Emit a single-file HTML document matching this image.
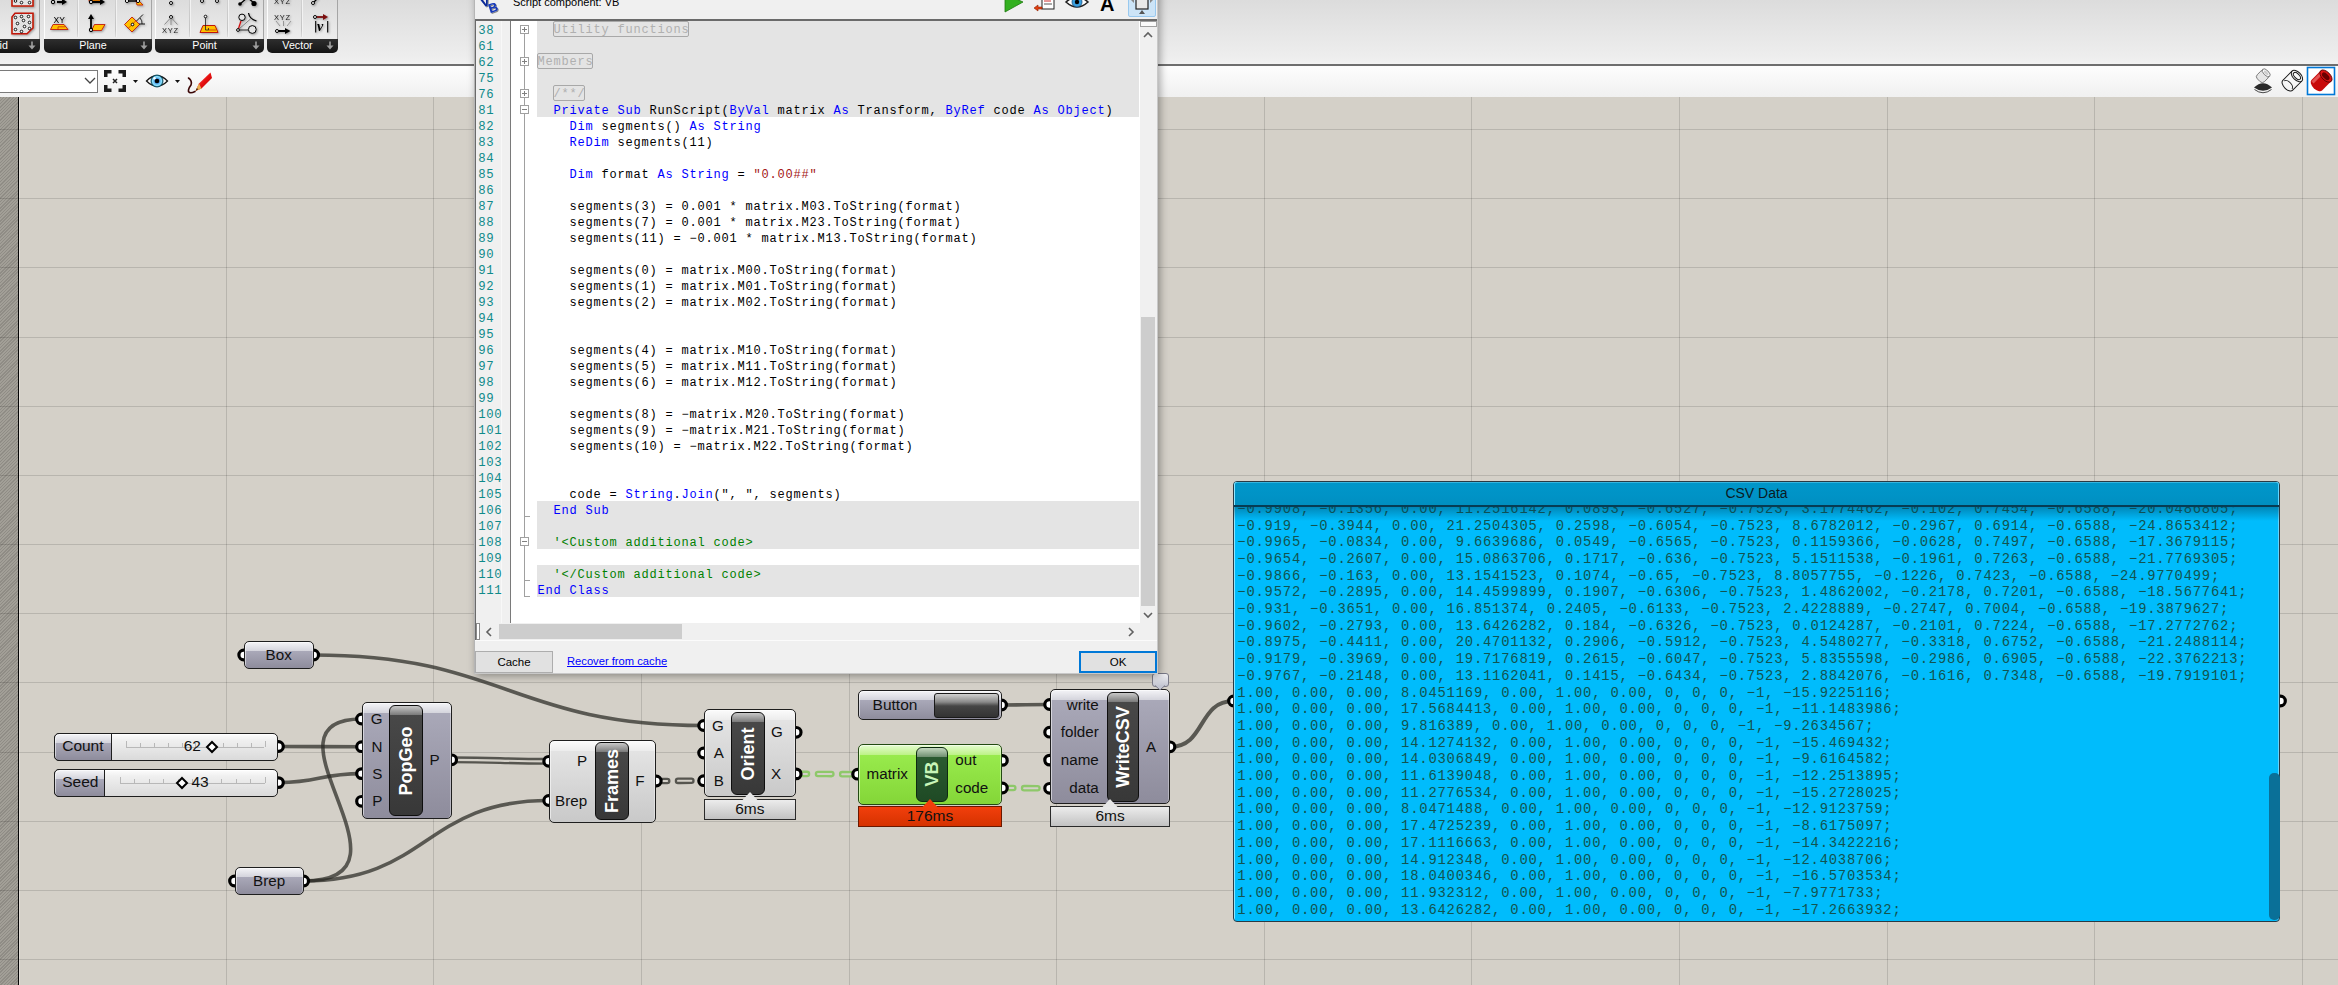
<!DOCTYPE html><html><head><meta charset="utf-8"><style>
*{box-sizing:border-box}
body{margin:0;width:2338px;height:985px;overflow:hidden;position:relative;background:#d4d0c8;font-family:"Liberation Sans",sans-serif;}
.a{position:absolute}
.mono{font-family:"Liberation Mono",monospace}
</style></head><body><div class="a" style="left:0;top:97px;width:2338px;height:888px;background:#d4d0c8"></div><div class="a" style="left:0;top:97px;width:18px;height:888px;background:repeating-linear-gradient(135deg,#8f8c85 0 1px,#a29f97 1px 2.3px)"></div><div class="a" style="left:18px;top:97px;width:1px;height:888px;background:#050505"></div><div class="a" style="left:19px;top:97px;width:1px;height:888px;background:#e2ded8"></div><div class="a" style="left:226px;top:97px;width:1px;height:888px;background:rgba(0,0,0,0.13)"></div><div class="a" style="left:433px;top:97px;width:1px;height:888px;background:rgba(0,0,0,0.13)"></div><div class="a" style="left:641px;top:97px;width:1px;height:888px;background:rgba(0,0,0,0.13)"></div><div class="a" style="left:849px;top:97px;width:1px;height:888px;background:rgba(0,0,0,0.13)"></div><div class="a" style="left:1056px;top:97px;width:1px;height:888px;background:rgba(0,0,0,0.13)"></div><div class="a" style="left:1264px;top:97px;width:1px;height:888px;background:rgba(0,0,0,0.13)"></div><div class="a" style="left:1471px;top:97px;width:1px;height:888px;background:rgba(0,0,0,0.13)"></div><div class="a" style="left:1679px;top:97px;width:1px;height:888px;background:rgba(0,0,0,0.13)"></div><div class="a" style="left:1887px;top:97px;width:1px;height:888px;background:rgba(0,0,0,0.13)"></div><div class="a" style="left:2094px;top:97px;width:1px;height:888px;background:rgba(0,0,0,0.13)"></div><div class="a" style="left:2302px;top:97px;width:1px;height:888px;background:rgba(0,0,0,0.13)"></div><div class="a" style="left:0px;top:129px;width:2338px;height:1px;background:rgba(0,0,0,0.13)"></div><div class="a" style="left:0px;top:198px;width:2338px;height:1px;background:rgba(0,0,0,0.13)"></div><div class="a" style="left:0px;top:267px;width:2338px;height:1px;background:rgba(0,0,0,0.13)"></div><div class="a" style="left:0px;top:337px;width:2338px;height:1px;background:rgba(0,0,0,0.13)"></div><div class="a" style="left:0px;top:406px;width:2338px;height:1px;background:rgba(0,0,0,0.13)"></div><div class="a" style="left:0px;top:475px;width:2338px;height:1px;background:rgba(0,0,0,0.13)"></div><div class="a" style="left:0px;top:544px;width:2338px;height:1px;background:rgba(0,0,0,0.13)"></div><div class="a" style="left:0px;top:613px;width:2338px;height:1px;background:rgba(0,0,0,0.13)"></div><div class="a" style="left:0px;top:682px;width:2338px;height:1px;background:rgba(0,0,0,0.13)"></div><div class="a" style="left:0px;top:752px;width:2338px;height:1px;background:rgba(0,0,0,0.13)"></div><div class="a" style="left:0px;top:821px;width:2338px;height:1px;background:rgba(0,0,0,0.13)"></div><div class="a" style="left:0px;top:890px;width:2338px;height:1px;background:rgba(0,0,0,0.13)"></div><div class="a" style="left:0px;top:959px;width:2338px;height:1px;background:rgba(0,0,0,0.13)"></div><div class="a" style="left:0;top:0;width:2338px;height:64px;background:linear-gradient(#dcdcdc,#eeeeee 58px,#f2f2f2)"></div><div class="a" style="left:0;top:64px;width:2338px;height:2px;background:#6e6e6e"></div><div class="a" style="left:0;top:66px;width:2338px;height:31px;background:linear-gradient(#fdfdfd,#f8f8f8 40%,#f0f0f0)"></div><div class="a" style="left:-10px;top:0;width:50px;height:39px;background:linear-gradient(#dcdcdc,#e9e9e9 30px,#ececec);border-left:1px solid #fdfdfd;border-right:1px solid #a5a5a5"></div><div class="a" style="left:-10px;top:39px;width:50px;height:14px;background:linear-gradient(#2e2e2e,#151515);border-radius:0 0 5px 5px"></div><svg class="a" style="left:27px;top:41px" width="10" height="10"><path d="M5 0.5 V6" stroke="#a0a0a0" stroke-width="1.6"/><path d="M1.5 4.5 L5 8.5 L8.5 4.5 Z" fill="#a0a0a0"/></svg><div class="a" style="left:-4px;top:37.5px;width:40px;height:14px;color:#fff;font-size:10.7px;line-height:15px">rid</div><div class="a" style="left:44px;top:0;width:108px;height:39px;background:linear-gradient(#dcdcdc,#e9e9e9 30px,#ececec);border-left:1px solid #fdfdfd;border-right:1px solid #a5a5a5"></div><div class="a" style="left:77px;top:0;width:1px;height:37px;background:linear-gradient(#d0d0d0,#c4c4c4 80%,#dcdcdc)"></div><div class="a" style="left:78px;top:0;width:1px;height:37px;background:#f2f2f2"></div><div class="a" style="left:115px;top:0;width:1px;height:37px;background:linear-gradient(#d0d0d0,#c4c4c4 80%,#dcdcdc)"></div><div class="a" style="left:116px;top:0;width:1px;height:37px;background:#f2f2f2"></div><div class="a" style="left:44px;top:39px;width:108px;height:14px;background:linear-gradient(#2e2e2e,#151515);border-radius:0 0 5px 5px"></div><div class="a" style="left:44px;top:37.5px;width:98px;height:14px;text-align:center;color:#fff;font-size:10.7px;line-height:15px">Plane</div><svg class="a" style="left:139px;top:41px" width="10" height="10"><path d="M5 0.5 V6" stroke="#a0a0a0" stroke-width="1.6"/><path d="M1.5 4.5 L5 8.5 L8.5 4.5 Z" fill="#a0a0a0"/></svg><div class="a" style="left:155px;top:0;width:109px;height:39px;background:linear-gradient(#dcdcdc,#e9e9e9 30px,#ececec);border-left:1px solid #fdfdfd;border-right:1px solid #a5a5a5"></div><div class="a" style="left:189px;top:0;width:1px;height:37px;background:linear-gradient(#d0d0d0,#c4c4c4 80%,#dcdcdc)"></div><div class="a" style="left:190px;top:0;width:1px;height:37px;background:#f2f2f2"></div><div class="a" style="left:227px;top:0;width:1px;height:37px;background:linear-gradient(#d0d0d0,#c4c4c4 80%,#dcdcdc)"></div><div class="a" style="left:228px;top:0;width:1px;height:37px;background:#f2f2f2"></div><div class="a" style="left:155px;top:39px;width:109px;height:14px;background:linear-gradient(#2e2e2e,#151515);border-radius:0 0 5px 5px"></div><div class="a" style="left:155px;top:37.5px;width:99px;height:14px;text-align:center;color:#fff;font-size:10.7px;line-height:15px">Point</div><svg class="a" style="left:251px;top:41px" width="10" height="10"><path d="M5 0.5 V6" stroke="#a0a0a0" stroke-width="1.6"/><path d="M1.5 4.5 L5 8.5 L8.5 4.5 Z" fill="#a0a0a0"/></svg><div class="a" style="left:267px;top:0;width:71px;height:39px;background:linear-gradient(#dcdcdc,#e9e9e9 30px,#ececec);border-left:1px solid #fdfdfd;border-right:1px solid #a5a5a5"></div><div class="a" style="left:301px;top:0;width:1px;height:37px;background:linear-gradient(#d0d0d0,#c4c4c4 80%,#dcdcdc)"></div><div class="a" style="left:302px;top:0;width:1px;height:37px;background:#f2f2f2"></div><div class="a" style="left:267px;top:39px;width:71px;height:14px;background:linear-gradient(#2e2e2e,#151515);border-radius:0 0 5px 5px"></div><div class="a" style="left:267px;top:37.5px;width:61px;height:14px;text-align:center;color:#fff;font-size:10.7px;line-height:15px">Vector</div><svg class="a" style="left:325px;top:41px" width="10" height="10"><path d="M5 0.5 V6" stroke="#a0a0a0" stroke-width="1.6"/><path d="M1.5 4.5 L5 8.5 L8.5 4.5 Z" fill="#a0a0a0"/></svg><svg class="a" style="left:0;top:0" width="340" height="40">
<defs><filter id="sh" x="-20%" y="-20%" width="150%" height="150%"><feDropShadow dx="1" dy="1" stdDeviation="0.8" flood-opacity="0.35"/></filter></defs>
<g filter="url(#sh)">
<!-- rid row1 -->
<path d="M12 -4 H33 V6 H12 Z" fill="#e4e4e4" stroke="#c01808" stroke-width="1.6"/>
<circle cx="15.5" cy="1" r="1.3" fill="#fff" stroke="#000" stroke-width="0.9"/><circle cx="21.5" cy="2.6" r="1.3" fill="#fff" stroke="#000" stroke-width="0.9"/><circle cx="29.5" cy="2.6" r="1.3" fill="#fff" stroke="#000" stroke-width="0.9"/>
<!-- rid row2 -->
<path d="M15 13.2 H33 V28 L27 33.8 H12 V17 Z" fill="#e2e2e2" stroke="#c01808" stroke-width="1.6"/>
<g fill="#fff" stroke="#000" stroke-width="0.9">
<circle cx="15.5" cy="17.5" r="1.3"/><circle cx="21.5" cy="16.5" r="1.3"/><circle cx="28.5" cy="16.5" r="1.3"/><circle cx="23.5" cy="20.5" r="1.3"/><circle cx="17.5" cy="23.5" r="1.3"/><circle cx="29.5" cy="22.5" r="1.3"/><circle cx="24.5" cy="26.5" r="1.3"/><circle cx="15.5" cy="29.5" r="1.3"/><circle cx="21.5" cy="31.5" r="1.3"/><circle cx="29.5" cy="28.5" r="1.3"/></g>
<!-- plane row1 -->
<circle cx="53" cy="2" r="1.6" fill="#fff" stroke="#000" stroke-width="1.1"/><path d="M57 2 H63" stroke="#000" stroke-width="2.2"/><path d="M62 -1.5 L67 2 L62 5 Z" fill="#000"/>
<rect x="89" y="-3" width="12" height="4" fill="#ffc000" stroke="#c01808" stroke-width="0.8"/><circle cx="91" cy="2" r="1.6" fill="#fff" stroke="#000" stroke-width="1.1"/><path d="M93 2 H101" stroke="#000" stroke-width="2.2"/><path d="M100 -1.5 L105 2 L100 5 Z" fill="#000"/>
<path d="M135 -3 L143 5 L137 5 Z" fill="#ffc000" stroke="#c01808" stroke-width="0.8"/><circle cx="127" cy="1" r="1.6" fill="#fff" stroke="#000" stroke-width="1"/><circle cx="138" cy="1" r="1.6" fill="#fff" stroke="#000" stroke-width="1"/><path d="M128.5 1 H136.5" stroke="#000" stroke-width="1.5"/>
<!-- plane row2 -->
<text x="53.5" y="22.5" font-family="Liberation Sans" font-size="8.5" fill="#000">XY</text>
<path d="M53 24.5 H64 L68 29.5 H50.5 Z" fill="#ffc000" stroke="#c01808" stroke-width="0.9"/><path d="M58 29.5 V26.8 H65" fill="none" stroke="#c01808" stroke-width="0.7"/>
<path d="M91 30 V17" stroke="#000" stroke-width="1.8"/><path d="M88 19 L91 14 L94 19 Z" fill="#000"/>
<path d="M94.5 24.5 H105 L101.5 30.5 H91.5 Z" fill="#ffc000" stroke="#c01808" stroke-width="0.9"/><circle cx="91" cy="30" r="1.6" fill="#fff" stroke="#000" stroke-width="1.1"/>
<path d="M132 17 L139.5 24.5 L132 32 L124.5 24.5 Z" fill="#ffc000" stroke="#c01808" stroke-width="0.9"/><path d="M128.3 28.3 L135.8 20.8" stroke="#c01808" stroke-width="0.7"/><circle cx="132.5" cy="24.5" r="1.3" fill="#fff" stroke="#000" stroke-width="1"/>
<path d="M136.5 21 L143 14.5 M139 24 H145" stroke="#000" stroke-width="0.9"/><path d="M140 18 Q142.5 20.5 142 24" fill="none" stroke="#000" stroke-width="0.8"/>
<!-- point row1 -->
<circle cx="171" cy="3" r="1.5" fill="#fff" stroke="#000" stroke-width="1"/>
<circle cx="202" cy="1" r="1.5" fill="#fff" stroke="#000" stroke-width="1"/><circle cx="217" cy="1" r="1.5" fill="#fff" stroke="#000" stroke-width="1"/>
<path d="M240 4 L247 -2 M248 -2 L254 3" stroke="#000" stroke-width="1.3"/><circle cx="240" cy="4" r="1.8" fill="#000"/><circle cx="254" cy="3.5" r="2.6" fill="#000"/>
<!-- point row2 -->
<circle cx="171" cy="17" r="1.5" fill="#fff" stroke="#000" stroke-width="1"/>
<path d="M170 18.5 L164.5 24.5 M171 18.5 V25 M172 18.5 L177.5 24.5" stroke="#777" stroke-width="0.8"/>
<text x="162" y="33" font-family="Liberation Sans" font-size="7.5" fill="#222" letter-spacing="0.8">XYZ</text>
<path d="M203 25.5 H215 L218 32.5 H200 Z" fill="#ffc000" stroke="#c01808" stroke-width="1"/><path d="M208.5 30 H216" stroke="#c01808" stroke-width="0.7"/>
<path d="M205.5 17.5 V30 H208.5 V28" fill="none" stroke="#222" stroke-width="0.8"/><circle cx="205.5" cy="16.5" r="1.3" fill="#fff" stroke="#000" stroke-width="0.9"/>
<path d="M239 29 L250.5 19" stroke="#444" stroke-width="0.6"/><path d="M238 30 L241 21" stroke="#d01010" stroke-width="1.3"/><path d="M239 30 H248.3" stroke="#111" stroke-width="0.9"/>
<circle cx="242" cy="17.3" r="3.2" fill="#e4e4e4" stroke="#000" stroke-width="1"/><circle cx="252.3" cy="29.5" r="3.9" fill="#e4e4e4" stroke="#000" stroke-width="1"/><circle cx="238" cy="30" r="1.4" fill="#fff" stroke="#000" stroke-width="1"/>
<path d="M248.5 13 Q249.5 19 256.5 21" fill="none" stroke="#000" stroke-width="1.3"/>
<!-- vector row1 -->
<text x="274" y="4" font-family="Liberation Sans" font-size="7.5" fill="#222" letter-spacing="0.8">XYZ</text>
<circle cx="313" cy="3" r="1.5" fill="#fff" stroke="#000" stroke-width="1"/><path d="M314 2 L318 -2" stroke="#000" stroke-width="1.2"/>
<!-- vector row2 -->
<text x="274" y="20" font-family="Liberation Sans" font-size="7.5" fill="#222" letter-spacing="0.8">XYZ</text>
<path d="M276 21 L280 26 M283.5 21 V26 M291 21 L287 26" stroke="#777" stroke-width="0.7"/>
<path d="M278 31 H286" stroke="#000" stroke-width="2"/><path d="M285 28 L290.5 31 L285 34 Z" fill="#000"/><circle cx="277" cy="31" r="1.5" fill="#fff" stroke="#000" stroke-width="1"/>
<path d="M316.5 17 H324" stroke="#7a0a0a" stroke-width="1.8"/><path d="M323 14 L328 17 L323 20 Z" fill="#7a0a0a"/><circle cx="315" cy="17" r="1.5" fill="#fff" stroke="#000" stroke-width="1"/>
<path d="M315.7 21 V32.5 M327.7 21 V32.5" stroke="#000" stroke-width="1.1"/>
<text x="317" y="31" font-family="Liberation Serif" font-weight="bold" font-style="italic" font-size="14" fill="#000">v</text>
</g></svg><div class="a" style="left:-2px;top:70px;width:100px;height:23px;background:#fff;border:1px solid #7a7a7a"></div><svg class="a" style="left:84px;top:77px" width="12" height="8"><path d="M1 1 L6 6 L11 1" fill="none" stroke="#444" stroke-width="1.3"/></svg><svg class="a" style="left:100px;top:66px" width="115" height="31">
<g fill="#1c1c1c"><path d="M4 4 H11.5 V7.5 H7.5 V11 H4 Z"/><path d="M26 4 H18.5 V7.5 H22.5 V11 H26 Z"/><path d="M4 26 H11.5 V22.5 H7.5 V19 H4 Z"/><path d="M26 26 H18.5 V22.5 H22.5 V19 H26 Z"/></g>
<path d="M13 13 L17 17 M17 13 L13 17" stroke="#222" stroke-width="1.5"/>
<path d="M33 14 L38 14 L35.5 17 Z" fill="#111"/>
<defs><radialGradient id="iris" cx="0.5" cy="0.5" r="0.5"><stop offset="0.3" stop-color="#3a8ae0"/><stop offset="0.75" stop-color="#8ee4ff"/><stop offset="1" stop-color="#1a6a90"/></radialGradient><linearGradient id="pen" x1="0" y1="0" x2="1" y2="1"><stop offset="0" stop-color="#ff9090"/><stop offset="0.5" stop-color="#e81010"/><stop offset="1" stop-color="#a00000"/></linearGradient></defs><path d="M46.5 15 Q57 4.5 67.5 15 Q57 25.5 46.5 15 Z" fill="#fff" stroke="#161616" stroke-width="1.3"/><circle cx="57" cy="15" r="6" fill="url(#iris)" stroke="#0a4a5a" stroke-width="0.9"/><circle cx="57" cy="15" r="2.3" fill="#000"/><circle cx="54.5" cy="12.3" r="1.2" fill="#fff"/>
<path d="M75 14 L80 14 L77.5 17 Z" fill="#111"/>
<path d="M88.5 12 Q92.5 15 91 19 Q88 23 88.5 25.5 Q90 28 95 25.5" fill="none" stroke="#3a0505" stroke-width="1.6" stroke-linecap="round"/><path d="M95.5 25 L99 17.5 L110.5 6.5 L112 12 L101.5 22.5 Z" fill="url(#pen)"/><path d="M95.5 25 L99 17.5 L101.5 22.5 Z" fill="#e8b050"/><path d="M95.5 25 L97 22 L98 23.5 Z" fill="#301000"/>
</svg><svg class="a" style="left:2250px;top:66px" width="88" height="31">
<g transform="rotate(45 13 10)"><rect x="8" y="5" width="10" height="11" rx="3" fill="#e6e6e6" stroke="#666" stroke-width="0.8"/><ellipse cx="13" cy="5.5" rx="5" ry="2.5" fill="#fafafa" stroke="#666" stroke-width="0.8"/><ellipse cx="13" cy="5.5" rx="3" ry="1.3" fill="#ccc"/></g>
<path d="M4 21.5 Q13 13 22 21.5 Q13 28 4 21.5 Z" fill="#2a2a2a"/><path d="M4.5 23.5 Q13 30 21.5 23.5" fill="none" stroke="#333" stroke-width="0.9"/>
<g transform="rotate(45 42 15)" fill="none" stroke="#1a1a1a" stroke-width="1"><path d="M35 8 V21 A7 4 0 0 0 49 21 V8"/><ellipse cx="42" cy="8" rx="7" ry="4"/><ellipse cx="42" cy="8" rx="4.5" ry="2.3"/><path d="M36.5 20.5 A5.5 3 0 0 1 47.5 20.5" /></g>
<rect x="57.5" y="1.5" width="27" height="27" fill="#fff" stroke="#0078d7" stroke-width="1.6"/>
<g transform="rotate(45 71 15)"><path d="M63.5 8 V21 A7.5 4.2 0 0 0 78.5 21 V8 Z" fill="#c80a0a"/><rect x="64.5" y="9" width="3" height="13" fill="#f07070" opacity="0.7"/><ellipse cx="71" cy="8" rx="7.5" ry="4.2" fill="#e01414" stroke="#500" stroke-width="0.9"/><ellipse cx="71" cy="8.3" rx="4.7" ry="2.5" fill="#6a0000"/></g>
</svg><svg class="a" style="left:0;top:0" width="2338" height="985"><path d="M313.7,655 C503.7,655 513.6,725.5 703.6,725.5" fill="none" stroke="#2a2924" stroke-width="3.6" stroke-opacity="0.72"/><path d="M278.5,746.5 C318.5,746.5 321.5,746.7 361.5,746.7" fill="none" stroke="#2a2924" stroke-width="3.6" stroke-opacity="0.72"/><path d="M278.5,782.6 C320.5,782.6 319.5,773.6 361.5,773.6" fill="none" stroke="#2a2924" stroke-width="3.6" stroke-opacity="0.72"/><path d="M303.7,881 C429.7,881 249.5,719 361.5,719" fill="none" stroke="#2a2924" stroke-width="3.6" stroke-opacity="0.72"/><path d="M303.7,881 C428.7,881 423.70000000000005,800.5 548.7,800.5" fill="none" stroke="#2a2924" stroke-width="3.6" stroke-opacity="0.72"/><path d="M451.7,759.8 C499.7,759.8 500.70000000000005,761.3 548.7,761.3" fill="none" stroke="#56554f" stroke-width="7.0" stroke-linecap="butt"/><path d="M451.7,759.8 C499.7,759.8 500.70000000000005,761.3 548.7,761.3" fill="none" stroke="#d4d0c8" stroke-width="2.2" stroke-linecap="butt"/><path d="M656.3,781 C680.3,781 679.6,780.7 703.6,780.7" fill="none" stroke="#56554f" stroke-width="6.6" stroke-linecap="round" stroke-dasharray="13.5 11" stroke-dashoffset="2.8"/><path d="M656.3,781 C680.3,781 679.6,780.7 703.6,780.7" fill="none" stroke="#d4d0c8" stroke-width="2" stroke-linecap="round" stroke-dasharray="13.5 11" stroke-dashoffset="2.8"/><path d="M796.2,773.9 C826.2,773.9 827.6,774.2 857.6,774.2" fill="none" stroke="#8ec86a" stroke-width="6.6" stroke-linecap="round" stroke-dasharray="13.5 11" stroke-dashoffset="2.8"/><path d="M796.2,773.9 C826.2,773.9 827.6,774.2 857.6,774.2" fill="none" stroke="#d4d0c8" stroke-width="2" stroke-linecap="round" stroke-dasharray="13.5 11" stroke-dashoffset="2.8"/><path d="M1002.4,788 C1026.4,788 1025.6,788.3 1049.6,788.3" fill="none" stroke="#8ec86a" stroke-width="6.6" stroke-linecap="round" stroke-dasharray="13.5 11" stroke-dashoffset="2.8"/><path d="M1002.4,788 C1026.4,788 1025.6,788.3 1049.6,788.3" fill="none" stroke="#d4d0c8" stroke-width="2" stroke-linecap="round" stroke-dasharray="13.5 11" stroke-dashoffset="2.8"/><path d="M1001.6,705 C1025.6,705 1025.6,704.5 1049.6,704.5" fill="none" stroke="#2a2924" stroke-width="3.6" stroke-opacity="0.72"/><path d="M1170,746.8 C1206,746.8 1197.5,701 1233.5,701" fill="none" stroke="#2a2924" stroke-width="4" stroke-opacity="0.72"/><circle cx="243.7" cy="655" r="4.8" fill="#fff" stroke="#000" stroke-width="3.2"/><circle cx="313.7" cy="655" r="4.8" fill="#fff" stroke="#000" stroke-width="3.2"/><circle cx="278.5" cy="746.5" r="4.8" fill="#fff" stroke="#000" stroke-width="3.2"/><circle cx="278.5" cy="782.6" r="4.8" fill="#fff" stroke="#000" stroke-width="3.2"/><circle cx="361.5" cy="719" r="4.8" fill="#fff" stroke="#000" stroke-width="3.2"/><circle cx="361.5" cy="746.7" r="4.8" fill="#fff" stroke="#000" stroke-width="3.2"/><circle cx="361.5" cy="773.6" r="4.8" fill="#fff" stroke="#000" stroke-width="3.2"/><circle cx="361.5" cy="801.3" r="4.8" fill="#fff" stroke="#000" stroke-width="3.2"/><circle cx="451.7" cy="759.8" r="4.8" fill="#fff" stroke="#000" stroke-width="3.2"/><circle cx="234.5" cy="881" r="4.8" fill="#fff" stroke="#000" stroke-width="3.2"/><circle cx="303.7" cy="881" r="4.8" fill="#fff" stroke="#000" stroke-width="3.2"/><circle cx="548.7" cy="761.3" r="4.8" fill="#fff" stroke="#000" stroke-width="3.2"/><circle cx="548.7" cy="800.5" r="4.8" fill="#fff" stroke="#000" stroke-width="3.2"/><circle cx="656.3" cy="781" r="4.8" fill="#fff" stroke="#000" stroke-width="3.2"/><circle cx="703.6" cy="725.5" r="4.8" fill="#fff" stroke="#000" stroke-width="3.2"/><circle cx="703.6" cy="753" r="4.8" fill="#fff" stroke="#000" stroke-width="3.2"/><circle cx="703.6" cy="780.7" r="4.8" fill="#fff" stroke="#000" stroke-width="3.2"/><circle cx="796.2" cy="732.3" r="4.8" fill="#fff" stroke="#000" stroke-width="3.2"/><circle cx="796.2" cy="773.9" r="4.8" fill="#fff" stroke="#000" stroke-width="3.2"/><circle cx="1001.6" cy="705" r="4.8" fill="#fff" stroke="#000" stroke-width="3.2"/><circle cx="857.6" cy="774.2" r="4.8" fill="#fff" stroke="#000" stroke-width="3.2"/><circle cx="1002.4" cy="760.4" r="4.8" fill="#fff" stroke="#000" stroke-width="3.2"/><circle cx="1002.4" cy="788" r="4.8" fill="#fff" stroke="#000" stroke-width="3.2"/><circle cx="1049.6" cy="704.5" r="4.8" fill="#fff" stroke="#000" stroke-width="3.2"/><circle cx="1049.6" cy="732.2" r="4.8" fill="#fff" stroke="#000" stroke-width="3.2"/><circle cx="1049.6" cy="760.1" r="4.8" fill="#fff" stroke="#000" stroke-width="3.2"/><circle cx="1049.6" cy="788.3" r="4.8" fill="#fff" stroke="#000" stroke-width="3.2"/><circle cx="1170" cy="746.8" r="4.8" fill="#fff" stroke="#000" stroke-width="3.2"/><circle cx="1233.5" cy="701" r="4.8" fill="#fff" stroke="#000" stroke-width="3.2"/><circle cx="2280.5" cy="701" r="4.8" fill="#fff" stroke="#000" stroke-width="3.2"/></svg><div class="a" style="left:243.7px;top:641.3px;width:70.0px;height:28.0px;background:linear-gradient(#f4f4f7 0px,#d4d4dc 9px,#a9a8b8 9.5px,#8e8c9c 100%);border:1px solid #1e1e1e;border-radius:5px;box-shadow:inset 1px 1px 0 rgba(255,255,255,0.55),inset -1px 0 0 rgba(255,255,255,0.35)"></div><div class="a" style="left:243.7px;top:645.3px;width:70.0px;height:20px;line-height:20px;text-align:center;white-space:nowrap;font-size:15.2px;color:#111;">Box</div><div class="a" style="left:234.5px;top:867.3px;width:69.2px;height:27.4px;background:linear-gradient(#f4f4f7 0px,#d4d4dc 9px,#a9a8b8 9.5px,#8e8c9c 100%);border:1px solid #1e1e1e;border-radius:5px;box-shadow:inset 1px 1px 0 rgba(255,255,255,0.55),inset -1px 0 0 rgba(255,255,255,0.35)"></div><div class="a" style="left:234.5px;top:871.0px;width:69.19999999999999px;height:20px;line-height:20px;text-align:center;white-space:nowrap;font-size:15.2px;color:#111;">Brep</div><div class="a" style="left:54.2px;top:732.5px;width:224.3px;height:28.1px;background:linear-gradient(#fdfdfd,#f0f0f0 6px,#dadada 100%);border:1px solid #1e1e1e;border-radius:5px;box-shadow:inset 0 1px 0 #fff"></div><div class="a" style="left:54.2px;top:732.5px;width:58.1px;height:28.1px;background:linear-gradient(#f4f4f7 0px,#d4d4dc 9px,#a9a8b8 9.5px,#8e8c9c 100%);border:1px solid #1e1e1e;border-right:1.5px solid #1e1e1e;border-radius:5px 0 0 5px;box-shadow:inset 1px 1px 0 rgba(255,255,255,0.55)"></div><div class="a" style="left:62.2px;top:735.5px;height:20px;line-height:20px;white-space:nowrap;font-size:15.2px;color:#111;font-size:15.5px">Count</div><div class="a" style="left:126.3px;top:746.5px;width:138.2px;height:1.0px;background:#b8b8b8"></div><div class="a" style="left:126.3px;top:740.5px;width:1.0px;height:6.0px;background:#b8b8b8"></div><div class="a" style="left:140.1px;top:742.5px;width:1.0px;height:4.0px;background:#b8b8b8"></div><div class="a" style="left:153.9px;top:742.5px;width:1.0px;height:4.0px;background:#b8b8b8"></div><div class="a" style="left:167.8px;top:742.5px;width:1.0px;height:4.0px;background:#b8b8b8"></div><div class="a" style="left:181.6px;top:742.5px;width:1.0px;height:4.0px;background:#b8b8b8"></div><div class="a" style="left:195.4px;top:742.5px;width:1.0px;height:4.0px;background:#b8b8b8"></div><div class="a" style="left:209.2px;top:742.5px;width:1.0px;height:4.0px;background:#b8b8b8"></div><div class="a" style="left:223.0px;top:742.5px;width:1.0px;height:4.0px;background:#b8b8b8"></div><div class="a" style="left:236.9px;top:742.5px;width:1.0px;height:4.0px;background:#b8b8b8"></div><div class="a" style="left:250.7px;top:742.5px;width:1.0px;height:4.0px;background:#b8b8b8"></div><div class="a" style="left:264.5px;top:740.5px;width:1.0px;height:6.0px;background:#b8b8b8"></div><div class="a" style="left:168.3px;top:735.5px;width:48px;height:20px;line-height:20px;text-align:center;font-size:15.5px;color:#111;background:transparent">62</div><svg class="a" style="left:205.4px;top:739.5px" width="14" height="14"><path d="M7 2 L12 7 L7 12 L2 7 Z" fill="#fff" stroke="#000" stroke-width="2"/></svg><div class="a" style="left:54.2px;top:768.6px;width:224.3px;height:28.1px;background:linear-gradient(#fdfdfd,#f0f0f0 6px,#dadada 100%);border:1px solid #1e1e1e;border-radius:5px;box-shadow:inset 0 1px 0 #fff"></div><div class="a" style="left:54.2px;top:768.6px;width:51.3px;height:28.1px;background:linear-gradient(#f4f4f7 0px,#d4d4dc 9px,#a9a8b8 9.5px,#8e8c9c 100%);border:1px solid #1e1e1e;border-right:1.5px solid #1e1e1e;border-radius:5px 0 0 5px;box-shadow:inset 1px 1px 0 rgba(255,255,255,0.55)"></div><div class="a" style="left:62.2px;top:771.7px;height:20px;line-height:20px;white-space:nowrap;font-size:15.2px;color:#111;font-size:15.5px">Seed</div><div class="a" style="left:119.5px;top:782.7px;width:145.0px;height:1.0px;background:#b8b8b8"></div><div class="a" style="left:119.5px;top:776.7px;width:1.0px;height:6.0px;background:#b8b8b8"></div><div class="a" style="left:134.0px;top:778.7px;width:1.0px;height:4.0px;background:#b8b8b8"></div><div class="a" style="left:148.5px;top:778.7px;width:1.0px;height:4.0px;background:#b8b8b8"></div><div class="a" style="left:163.0px;top:778.7px;width:1.0px;height:4.0px;background:#b8b8b8"></div><div class="a" style="left:177.5px;top:778.7px;width:1.0px;height:4.0px;background:#b8b8b8"></div><div class="a" style="left:192.0px;top:778.7px;width:1.0px;height:4.0px;background:#b8b8b8"></div><div class="a" style="left:206.5px;top:778.7px;width:1.0px;height:4.0px;background:#b8b8b8"></div><div class="a" style="left:221.0px;top:778.7px;width:1.0px;height:4.0px;background:#b8b8b8"></div><div class="a" style="left:235.5px;top:778.7px;width:1.0px;height:4.0px;background:#b8b8b8"></div><div class="a" style="left:250.0px;top:778.7px;width:1.0px;height:4.0px;background:#b8b8b8"></div><div class="a" style="left:264.5px;top:776.7px;width:1.0px;height:6.0px;background:#b8b8b8"></div><div class="a" style="left:176.0px;top:771.7px;width:48px;height:20px;line-height:20px;text-align:center;font-size:15.5px;color:#111;background:transparent">43</div><svg class="a" style="left:175.0px;top:775.7px" width="14" height="14"><path d="M7 2 L12 7 L7 12 L2 7 Z" fill="#fff" stroke="#000" stroke-width="2"/></svg><div class="a" style="left:361.5px;top:702.2px;width:90.2px;height:116.4px;background:linear-gradient(#f4f4f7 0px,#d4d4dc 10px,#a9a8b8 10.5px,#8e8c9c 100%);border:1px solid #1e1e1e;border-radius:5px;box-shadow:inset 1px 1px 0 rgba(255,255,255,0.55),inset -1px 0 0 rgba(255,255,255,0.35)"></div><div class="a" style="left:389.3px;top:705.3px;width:33.5px;height:110.9px;background:linear-gradient(#c8c8c8 0px,#7a7a7a 9px,#484848 9.5px,#383838 100%);border:1.5px solid #0e0e0e;border-radius:6px;"></div><div class="a" style="left:346.1px;top:748.8px;width:120px;height:24px;line-height:24px;text-align:center;color:#ffffff;font-weight:bold;font-size:18px;transform:rotate(-90deg);white-space:nowrap">PopGeo</div><div class="a" style="left:362.5px;top:709.0px;width:20px;height:20px;line-height:20px;text-align:right;white-space:nowrap;font-size:15.2px;color:#111;">G</div><div class="a" style="left:362.5px;top:736.7px;width:20px;height:20px;line-height:20px;text-align:right;white-space:nowrap;font-size:15.2px;color:#111;">N</div><div class="a" style="left:362.5px;top:763.6px;width:20px;height:20px;line-height:20px;text-align:right;white-space:nowrap;font-size:15.2px;color:#111;">S</div><div class="a" style="left:362.5px;top:791.3px;width:20px;height:20px;line-height:20px;text-align:right;white-space:nowrap;font-size:15.2px;color:#111;">P</div><div class="a" style="left:429.4px;top:749.8px;height:20px;line-height:20px;white-space:nowrap;font-size:15.2px;color:#111;">P</div><div class="a" style="left:548.7px;top:739.7px;width:107.6px;height:82.9px;background:linear-gradient(#fbfbfb 0px,#ececec 10px,#e3e3e3 10.5px,#c9c9c9 100%);border:1px solid #1e1e1e;border-radius:5px;box-shadow:inset 1px 1px 0 rgba(255,255,255,0.55),inset -1px 0 0 rgba(255,255,255,0.35)"></div><div class="a" style="left:595.2px;top:742.4px;width:33.9px;height:77.8px;background:linear-gradient(#c8c8c8 0px,#7a7a7a 9px,#484848 9.5px,#383838 100%);border:1.5px solid #0e0e0e;border-radius:6px;"></div><div class="a" style="left:552.2px;top:769.3px;width:120px;height:24px;line-height:24px;text-align:center;color:#ffffff;font-weight:bold;font-size:18px;transform:rotate(-90deg);white-space:nowrap">Frames</div><div class="a" style="left:547.2px;top:751.3px;width:40px;height:20px;line-height:20px;text-align:right;white-space:nowrap;font-size:15.2px;color:#111;">P</div><div class="a" style="left:547.2px;top:790.5px;width:40px;height:20px;line-height:20px;text-align:right;white-space:nowrap;font-size:15.2px;color:#111;">Brep</div><div class="a" style="left:635.2px;top:771.0px;height:20px;line-height:20px;white-space:nowrap;font-size:15.2px;color:#111;">F</div><div class="a" style="left:703.6px;top:709.2px;width:92.6px;height:88.1px;background:linear-gradient(#fbfbfb 0px,#ececec 10px,#e3e3e3 10.5px,#c9c9c9 100%);border:1px solid #1e1e1e;border-radius:5px;box-shadow:inset 1px 1px 0 rgba(255,255,255,0.55),inset -1px 0 0 rgba(255,255,255,0.35)"></div><div class="a" style="left:731.2px;top:712.2px;width:33.8px;height:83.1px;background:linear-gradient(#c8c8c8 0px,#7a7a7a 9px,#484848 9.5px,#383838 100%);border:1.5px solid #0e0e0e;border-radius:6px;"></div><div class="a" style="left:688.1px;top:741.8px;width:120px;height:24px;line-height:24px;text-align:center;color:#ffffff;font-weight:bold;font-size:18px;transform:rotate(-90deg);white-space:nowrap">Orient</div><div class="a" style="left:703.9px;top:715.5px;width:20px;height:20px;line-height:20px;text-align:right;white-space:nowrap;font-size:15.2px;color:#111;">G</div><div class="a" style="left:703.9px;top:743.0px;width:20px;height:20px;line-height:20px;text-align:right;white-space:nowrap;font-size:15.2px;color:#111;">A</div><div class="a" style="left:703.9px;top:770.7px;width:20px;height:20px;line-height:20px;text-align:right;white-space:nowrap;font-size:15.2px;color:#111;">B</div><div class="a" style="left:771.0px;top:722.3px;height:20px;line-height:20px;white-space:nowrap;font-size:15.2px;color:#111;">G</div><div class="a" style="left:771.0px;top:763.9px;height:20px;line-height:20px;white-space:nowrap;font-size:15.2px;color:#111;">X</div><div class="a" style="left:703.6px;top:799.4px;width:92.6px;height:20.3px;background:linear-gradient(#ececec,#c2c2c2);border:1px solid #2a2a2a;"></div><svg class="a" style="left:740.5px;top:791.4px" width="18" height="10"><path d="M1 9.5 L9 1 L17 9.5 Z" fill="#e6e6e6"/></svg><div class="a" style="left:703.6px;top:798.5px;width:92.60000000000002px;height:20px;line-height:20px;text-align:center;white-space:nowrap;font-size:15.2px;color:#111;font-size:15.5px">6ms</div><div class="a" style="left:858.4px;top:690.0px;width:143.2px;height:30.3px;background:linear-gradient(#f4f4f7 0px,#d4d4dc 9px,#a9a8b8 9.5px,#8e8c9c 100%);border:1px solid #1e1e1e;border-radius:5px;box-shadow:inset 1px 1px 0 rgba(255,255,255,0.55),inset -1px 0 0 rgba(255,255,255,0.35)"></div><div class="a" style="left:855.0px;top:695.0px;width:80px;height:20px;line-height:20px;text-align:center;white-space:nowrap;font-size:15.2px;color:#111;font-size:15.5px">Button</div><div class="a" style="left:934.2px;top:692.7px;width:64.7px;height:25.0px;background:linear-gradient(#d0d0d0 0px,#8a8a8a 8px,#454545 12px,#333 100%);border:1.5px solid #1a1a1a;border-radius:3px"></div><div class="a" style="left:857.6px;top:743.8px;width:144.8px;height:60.9px;background:linear-gradient(#e4fcd0 0px,#bdf286 10px,#98ea4c 10.5px,#84d638 100%);border:1px solid #234a12;border-radius:5px;box-shadow:inset 1px 1px 0 rgba(255,255,255,0.55),inset -1px 0 0 rgba(255,255,255,0.35)"></div><div class="a" style="left:915.6px;top:746.6px;width:32.9px;height:55.2px;background:linear-gradient(#c4d8c0 0px,#6f8f70 9px,#2a5a30 9.5px,#1f4a25 100%);border:1.5px solid #0d2a10;border-radius:6px;"></div><div class="a" style="left:872.0px;top:762.2px;width:120px;height:24px;line-height:24px;text-align:center;color:#c8f5b8;font-weight:bold;font-size:18px;transform:rotate(-90deg);white-space:nowrap">VB</div><div class="a" style="left:847.9px;top:764.2px;width:60px;height:20px;line-height:20px;text-align:right;white-space:nowrap;font-size:15.2px;color:#111;">matrix</div><div class="a" style="left:955.3px;top:750.4px;height:20px;line-height:20px;white-space:nowrap;font-size:15.2px;color:#111;">out</div><div class="a" style="left:955.3px;top:778.0px;height:20px;line-height:20px;white-space:nowrap;font-size:15.2px;color:#111;">code</div><div class="a" style="left:857.6px;top:806.4px;width:144.8px;height:20.6px;background:linear-gradient(#f23f0c,#d53200);border:1px solid #6a1800;"></div><svg class="a" style="left:921.0px;top:798.4px" width="18" height="10"><path d="M1 9.5 L9 1 L17 9.5 Z" fill="#f23f0c"/></svg><div class="a" style="left:857.6px;top:805.7px;width:144.79999999999995px;height:20px;line-height:20px;text-align:center;white-space:nowrap;font-size:15.2px;color:#111;font-size:15.5px">176ms</div><div class="a" style="left:1049.6px;top:688.6px;width:120.4px;height:115.2px;background:linear-gradient(#f4f4f7 0px,#d4d4dc 10px,#a9a8b8 10.5px,#8e8c9c 100%);border:1px solid #1e1e1e;border-radius:5px;box-shadow:inset 1px 1px 0 rgba(255,255,255,0.55),inset -1px 0 0 rgba(255,255,255,0.35)"></div><div class="a" style="left:1106.7px;top:691.6px;width:32.8px;height:110.0px;background:linear-gradient(#c8c8c8 0px,#7a7a7a 9px,#484848 9.5px,#383838 100%);border:1.5px solid #0e0e0e;border-radius:6px;"></div><div class="a" style="left:1063.1px;top:734.6px;width:120px;height:24px;line-height:24px;text-align:center;color:#ffffff;font-weight:bold;font-size:18px;transform:rotate(-90deg);white-space:nowrap">WriteCSV</div><div class="a" style="left:1038.8px;top:694.5px;width:60px;height:20px;line-height:20px;text-align:right;white-space:nowrap;font-size:15.2px;color:#111;">write</div><div class="a" style="left:1038.8px;top:722.2px;width:60px;height:20px;line-height:20px;text-align:right;white-space:nowrap;font-size:15.2px;color:#111;">folder</div><div class="a" style="left:1038.8px;top:750.1px;width:60px;height:20px;line-height:20px;text-align:right;white-space:nowrap;font-size:15.2px;color:#111;">name</div><div class="a" style="left:1038.8px;top:778.3px;width:60px;height:20px;line-height:20px;text-align:right;white-space:nowrap;font-size:15.2px;color:#111;">data</div><div class="a" style="left:1145.9px;top:736.8px;height:20px;line-height:20px;white-space:nowrap;font-size:15.2px;color:#111;">A</div><div class="a" style="left:1049.6px;top:806.0px;width:120.9px;height:21.1px;background:linear-gradient(#ececec,#c2c2c2);border:1px solid #2a2a2a;"></div><svg class="a" style="left:1100.8px;top:798.0px" width="18" height="10"><path d="M1 9.5 L9 1 L17 9.5 Z" fill="#e6e6e6"/></svg><div class="a" style="left:1049.6px;top:805.5px;width:120.90000000000009px;height:20px;line-height:20px;text-align:center;white-space:nowrap;font-size:15.2px;color:#111;font-size:15.5px">6ms</div><div class="a" style="left:1151.6px;top:672.6px;width:17.3px;height:14.1px;background:linear-gradient(#f2f2f5,#c4c6d2);border:1px solid #7a7a88;border-radius:3px"></div><svg class="a" style="left:1154px;top:685px" width="12" height="6"><path d="M1 0.5 L6 5 L11 0.5" fill="#c4c6d2" stroke="#7a7a88" stroke-width="1"/></svg><div class="a" style="left:1232.6px;top:481.0px;width:1047.9px;height:440.5px;background:#00bcfc;border:1px solid #2a3a44;border-radius:4px;overflow:hidden;box-shadow:inset 1px 1px 0 #8fe6ff,inset -1px 0 0 #60d4ff"></div><div class="a mono" style="left:1237.31px;top:501.8px;width:1045.9px;font-size:13.8px;letter-spacing:0.820px;line-height:16.7px;color:#125450;white-space:pre;overflow:hidden;height:418.7px">−0.9908, −0.1356, 0.00, 11.2516142, 0.0893, −0.6527, −0.7523, 3.1774462, −0.102, 0.7454, −0.6588, −20.0486805;<br>−0.919, −0.3944, 0.00, 21.2504305, 0.2598, −0.6054, −0.7523, 8.6782012, −0.2967, 0.6914, −0.6588, −24.8653412;<br>−0.9965, −0.0834, 0.00, 9.6639686, 0.0549, −0.6565, −0.7523, 0.1159366, −0.0628, 0.7497, −0.6588, −17.3679115;<br>−0.9654, −0.2607, 0.00, 15.0863706, 0.1717, −0.636, −0.7523, 5.1511538, −0.1961, 0.7263, −0.6588, −21.7769305;<br>−0.9866, −0.163, 0.00, 13.1541523, 0.1074, −0.65, −0.7523, 8.8057755, −0.1226, 0.7423, −0.6588, −24.9770499;<br>−0.9572, −0.2895, 0.00, 14.4599899, 0.1907, −0.6306, −0.7523, 1.4862002, −0.2178, 0.7201, −0.6588, −18.5677641;<br>−0.931, −0.3651, 0.00, 16.851374, 0.2405, −0.6133, −0.7523, 2.4228889, −0.2747, 0.7004, −0.6588, −19.3879627;<br>−0.9602, −0.2793, 0.00, 13.6426282, 0.184, −0.6326, −0.7523, 0.0124287, −0.2101, 0.7224, −0.6588, −17.2772762;<br>−0.8975, −0.4411, 0.00, 20.4701132, 0.2906, −0.5912, −0.7523, 4.5480277, −0.3318, 0.6752, −0.6588, −21.2488114;<br>−0.9179, −0.3969, 0.00, 19.7176819, 0.2615, −0.6047, −0.7523, 5.8355598, −0.2986, 0.6905, −0.6588, −22.3762213;<br>−0.9767, −0.2148, 0.00, 13.1162041, 0.1415, −0.6434, −0.7523, 2.8842076, −0.1616, 0.7348, −0.6588, −19.7919101;<br>1.00, 0.00, 0.00, 8.0451169, 0.00, 1.00, 0.00, 0, 0, 0, −1, −15.9225116;<br>1.00, 0.00, 0.00, 17.5684413, 0.00, 1.00, 0.00, 0, 0, 0, −1, −11.1483986;<br>1.00, 0.00, 0.00, 9.816389, 0.00, 1.00, 0.00, 0, 0, 0, −1, −9.2634567;<br>1.00, 0.00, 0.00, 14.1274132, 0.00, 1.00, 0.00, 0, 0, 0, −1, −15.469432;<br>1.00, 0.00, 0.00, 14.0306849, 0.00, 1.00, 0.00, 0, 0, 0, −1, −9.6164582;<br>1.00, 0.00, 0.00, 11.6139048, 0.00, 1.00, 0.00, 0, 0, 0, −1, −12.2513895;<br>1.00, 0.00, 0.00, 11.2776534, 0.00, 1.00, 0.00, 0, 0, 0, −1, −15.2728025;<br>1.00, 0.00, 0.00, 8.0471488, 0.00, 1.00, 0.00, 0, 0, 0, −1, −12.9123759;<br>1.00, 0.00, 0.00, 17.4725239, 0.00, 1.00, 0.00, 0, 0, 0, −1, −8.6175097;<br>1.00, 0.00, 0.00, 17.1116663, 0.00, 1.00, 0.00, 0, 0, 0, −1, −14.3422216;<br>1.00, 0.00, 0.00, 14.912348, 0.00, 1.00, 0.00, 0, 0, 0, −1, −12.4038706;<br>1.00, 0.00, 0.00, 18.0400346, 0.00, 1.00, 0.00, 0, 0, 0, −1, −16.5703534;<br>1.00, 0.00, 0.00, 11.932312, 0.00, 1.00, 0.00, 0, 0, 0, −1, −7.9771733;<br>1.00, 0.00, 0.00, 13.6426282, 0.00, 1.00, 0.00, 0, 0, 0, −1, −17.2663932;</div><div class="a" style="left:1233.6px;top:507.0px;width:1045.9px;height:14.0px;background:linear-gradient(rgba(0,70,100,0.45),rgba(0,70,100,0))"></div><div class="a" style="left:1233.6px;top:482.0px;width:1045.9px;height:23.0px;background:linear-gradient(#4fc3ea 0px,#0096c9 1.5px,#0093c6 60%,#008fc0);border-radius:3px 3px 0 0;box-shadow:inset 1px 0 0 #8fe6ff,inset -1px 0 0 #60d4ff"></div><div class="a" style="left:1233.6px;top:505.0px;width:1045.9px;height:2.0px;background:#063c54"></div><div class="a" style="left:1606.5px;top:483.0px;width:300px;height:20px;line-height:20px;text-align:center;white-space:nowrap;font-size:14px;color:#0a1a24">CSV Data</div><div class="a" style="left:2269.0px;top:773.0px;width:11.0px;height:147.0px;background:#0a7098;border-radius:5px"></div><div class="a" style="left:474px;top:-20px;width:684px;height:694px;background:#f0f0f0;border-left:1px solid #b5b5b5;border-right:1px solid #c8c8c8;border-bottom:1px solid #c8c8c8;box-shadow:2px 2px 8px rgba(0,0,0,0.35)"></div><div class="a" style="left:513px;top:-5px;font-size:11px;line-height:14px;color:#000;white-space:nowrap">Script component: VB</div><svg class="a" style="left:480px;top:0" width="24" height="16"><defs><filter id="vbs"><feDropShadow dx="1" dy="1" stdDeviation="0.7" flood-opacity="0.45"/></filter></defs><g filter="url(#vbs)" font-family="Liberation Sans" font-weight="bold" fill="#0a2a9a"><text x="1" y="6" font-size="13.5" transform="rotate(-18 6 3)">V</text><text x="8.5" y="12" font-size="13" fill="#1438b8" transform="rotate(-18 13 8)">B</text></g></svg><svg class="a" style="left:1002px;top:0" width="24" height="14"><path d="M3 -6 L21 2 L3 12 Z" fill="#33b020" stroke="#1e7a10" stroke-width="0.8"/></svg><svg class="a" style="left:1032px;top:0" width="28" height="15"><rect x="10" y="-4" width="12" height="13" fill="#fff" stroke="#222" stroke-width="1"/><line x1="12" y1="1" x2="19" y2="1" stroke="#d03030"/><line x1="12" y1="4" x2="20" y2="4" stroke="#555"/><line x1="12" y1="-1" x2="16" y2="-1" stroke="#2040c0"/><path d="M2 8 L6 5 L6 7 L10 7 L10 9 L6 9 L6 11 Z" fill="#e04010" stroke="#902000" stroke-width="0.6"/></svg><svg class="a" style="left:1064px;top:0" width="26" height="14"><path d="M2 2 Q13 -8 24 2 Q13 12 2 2 Z" fill="#fff" stroke="#222" stroke-width="1.6"/><circle cx="13" cy="2" r="5" fill="#3aa0e0" stroke="#1a5080" stroke-width="0.8"/><circle cx="13" cy="2" r="2.2" fill="#000"/></svg><div class="a" style="left:1100px;top:-6px;font-size:20px;font-weight:bold;line-height:20px;color:#000">A</div><div class="a" style="left:1128px;top:-4px;width:28px;height:21px;background:#cce4f7;border:1px solid #99c9ef;border-radius:2px"></div><svg class="a" style="left:1130px;top:0" width="24" height="15"><rect x="6" y="-3" width="12" height="12" fill="#e8e8e8" stroke="#222" stroke-width="1.2"/><path d="M9 14 L12 10 L15 14 Z" fill="#555"/><path d="M1 0 L4 -3 L4 3 Z M23 0 L20 -3 L20 3Z" fill="#888"/></svg><div class="a" style="left:475px;top:19px;width:682px;height:2px;background:#6a6a6a"></div><div class="a" style="left:475px;top:19px;width:1px;height:622px;background:#6a6a6a"></div><div class="a" style="left:476px;top:21px;width:664px;height:602px;background:#fff"></div><div class="a" style="left:476px;top:21px;width:34px;height:602px;background:#f0f0f0"></div><div class="a" style="left:510px;top:21px;width:1px;height:602px;background:#7a7a7a"></div><div class="a" style="left:501px;top:21px;width:1px;height:602px;background:#f8f8f8"></div><div class="a" style="left:537px;top:21px;width:602px;height:16px;background:#e4e4e4"></div><div class="a mono" style="left:478.31px;top:22.5px;width:34px;height:16px;font-size:12.3px;letter-spacing:0.620px;line-height:16px;color:#0f8a8a;white-space:pre">38</div><div class="a mono" style="left:553.0px;top:21px;width:136.0px;height:16px;border:1px solid #a8a8a8;border-radius:2px;font-size:12.0px;letter-spacing:0.800px;text-indent:-0.60px;line-height:16px;color:#b0b0b0;white-space:pre">Utility functions</div><div class="a" style="left:537px;top:37px;width:602px;height:16px;background:#e4e4e4"></div><div class="a mono" style="left:478.31px;top:38.5px;width:34px;height:16px;font-size:12.3px;letter-spacing:0.620px;line-height:16px;color:#0f8a8a;white-space:pre">61</div><div class="a" style="left:537px;top:53px;width:602px;height:16px;background:#e4e4e4"></div><div class="a mono" style="left:478.31px;top:54.5px;width:34px;height:16px;font-size:12.3px;letter-spacing:0.620px;line-height:16px;color:#0f8a8a;white-space:pre">62</div><div class="a mono" style="left:537.0px;top:53px;width:56.0px;height:16px;border:1px solid #a8a8a8;border-radius:2px;font-size:12.0px;letter-spacing:0.800px;text-indent:-0.60px;line-height:16px;color:#b0b0b0;white-space:pre">Members</div><div class="a" style="left:537px;top:69px;width:602px;height:16px;background:#e4e4e4"></div><div class="a mono" style="left:478.31px;top:70.5px;width:34px;height:16px;font-size:12.3px;letter-spacing:0.620px;line-height:16px;color:#0f8a8a;white-space:pre">75</div><div class="a" style="left:537px;top:85px;width:602px;height:16px;background:#e4e4e4"></div><div class="a mono" style="left:478.31px;top:86.5px;width:34px;height:16px;font-size:12.3px;letter-spacing:0.620px;line-height:16px;color:#0f8a8a;white-space:pre">76</div><div class="a mono" style="left:553.0px;top:85px;width:32.0px;height:16px;border:1px solid #a8a8a8;border-radius:2px;font-size:12.0px;letter-spacing:0.800px;text-indent:-0.60px;line-height:16px;color:#b0b0b0;white-space:pre">/**/</div><div class="a" style="left:537px;top:101px;width:602px;height:16px;background:#e4e4e4"></div><div class="a mono" style="left:478.31px;top:102.5px;width:34px;height:16px;font-size:12.3px;letter-spacing:0.620px;line-height:16px;color:#0f8a8a;white-space:pre">81</div><div class="a mono" style="left:537.40px;top:102.5px;height:16px;font-size:12.0px;letter-spacing:0.800px;line-height:16px;color:#000;white-space:pre"><span style="color:#000">  </span><span style="color:#0000ff">Private</span><span style="color:#000"> </span><span style="color:#0000ff">Sub</span><span style="color:#000"> RunScript(</span><span style="color:#0000ff">ByVal</span><span style="color:#000"> matrix </span><span style="color:#0000ff">As</span><span style="color:#000"> Transform, </span><span style="color:#0000ff">ByRef</span><span style="color:#000"> code </span><span style="color:#0000ff">As</span><span style="color:#000"> </span><span style="color:#0000ff">Object</span><span style="color:#000">)</span></div><div class="a mono" style="left:478.31px;top:118.5px;width:34px;height:16px;font-size:12.3px;letter-spacing:0.620px;line-height:16px;color:#0f8a8a;white-space:pre">82</div><div class="a mono" style="left:537.40px;top:118.5px;height:16px;font-size:12.0px;letter-spacing:0.800px;line-height:16px;color:#000;white-space:pre"><span style="color:#000">    </span><span style="color:#0000ff">Dim</span><span style="color:#000"> segments() </span><span style="color:#0000ff">As</span><span style="color:#000"> </span><span style="color:#0000ff">String</span></div><div class="a mono" style="left:478.31px;top:134.5px;width:34px;height:16px;font-size:12.3px;letter-spacing:0.620px;line-height:16px;color:#0f8a8a;white-space:pre">83</div><div class="a mono" style="left:537.40px;top:134.5px;height:16px;font-size:12.0px;letter-spacing:0.800px;line-height:16px;color:#000;white-space:pre"><span style="color:#000">    </span><span style="color:#0000ff">ReDim</span><span style="color:#000"> segments(11)</span></div><div class="a mono" style="left:478.31px;top:150.5px;width:34px;height:16px;font-size:12.3px;letter-spacing:0.620px;line-height:16px;color:#0f8a8a;white-space:pre">84</div><div class="a mono" style="left:478.31px;top:166.5px;width:34px;height:16px;font-size:12.3px;letter-spacing:0.620px;line-height:16px;color:#0f8a8a;white-space:pre">85</div><div class="a mono" style="left:537.40px;top:166.5px;height:16px;font-size:12.0px;letter-spacing:0.800px;line-height:16px;color:#000;white-space:pre"><span style="color:#000">    </span><span style="color:#0000ff">Dim</span><span style="color:#000"> format </span><span style="color:#0000ff">As</span><span style="color:#000"> </span><span style="color:#0000ff">String</span><span style="color:#000"> = </span><span style="color:#a31515">&quot;0.00##&quot;</span></div><div class="a mono" style="left:478.31px;top:182.5px;width:34px;height:16px;font-size:12.3px;letter-spacing:0.620px;line-height:16px;color:#0f8a8a;white-space:pre">86</div><div class="a mono" style="left:478.31px;top:198.5px;width:34px;height:16px;font-size:12.3px;letter-spacing:0.620px;line-height:16px;color:#0f8a8a;white-space:pre">87</div><div class="a mono" style="left:537.40px;top:198.5px;height:16px;font-size:12.0px;letter-spacing:0.800px;line-height:16px;color:#000;white-space:pre"><span style="color:#000">    segments(3) = 0.001 * matrix.M03.ToString(format)</span></div><div class="a mono" style="left:478.31px;top:214.5px;width:34px;height:16px;font-size:12.3px;letter-spacing:0.620px;line-height:16px;color:#0f8a8a;white-space:pre">88</div><div class="a mono" style="left:537.40px;top:214.5px;height:16px;font-size:12.0px;letter-spacing:0.800px;line-height:16px;color:#000;white-space:pre"><span style="color:#000">    segments(7) = 0.001 * matrix.M23.ToString(format)</span></div><div class="a mono" style="left:478.31px;top:230.5px;width:34px;height:16px;font-size:12.3px;letter-spacing:0.620px;line-height:16px;color:#0f8a8a;white-space:pre">89</div><div class="a mono" style="left:537.40px;top:230.5px;height:16px;font-size:12.0px;letter-spacing:0.800px;line-height:16px;color:#000;white-space:pre"><span style="color:#000">    segments(11) = −0.001 * matrix.M13.ToString(format)</span></div><div class="a mono" style="left:478.31px;top:246.5px;width:34px;height:16px;font-size:12.3px;letter-spacing:0.620px;line-height:16px;color:#0f8a8a;white-space:pre">90</div><div class="a mono" style="left:478.31px;top:262.5px;width:34px;height:16px;font-size:12.3px;letter-spacing:0.620px;line-height:16px;color:#0f8a8a;white-space:pre">91</div><div class="a mono" style="left:537.40px;top:262.5px;height:16px;font-size:12.0px;letter-spacing:0.800px;line-height:16px;color:#000;white-space:pre"><span style="color:#000">    segments(0) = matrix.M00.ToString(format)</span></div><div class="a mono" style="left:478.31px;top:278.5px;width:34px;height:16px;font-size:12.3px;letter-spacing:0.620px;line-height:16px;color:#0f8a8a;white-space:pre">92</div><div class="a mono" style="left:537.40px;top:278.5px;height:16px;font-size:12.0px;letter-spacing:0.800px;line-height:16px;color:#000;white-space:pre"><span style="color:#000">    segments(1) = matrix.M01.ToString(format)</span></div><div class="a mono" style="left:478.31px;top:294.5px;width:34px;height:16px;font-size:12.3px;letter-spacing:0.620px;line-height:16px;color:#0f8a8a;white-space:pre">93</div><div class="a mono" style="left:537.40px;top:294.5px;height:16px;font-size:12.0px;letter-spacing:0.800px;line-height:16px;color:#000;white-space:pre"><span style="color:#000">    segments(2) = matrix.M02.ToString(format)</span></div><div class="a mono" style="left:478.31px;top:310.5px;width:34px;height:16px;font-size:12.3px;letter-spacing:0.620px;line-height:16px;color:#0f8a8a;white-space:pre">94</div><div class="a mono" style="left:478.31px;top:326.5px;width:34px;height:16px;font-size:12.3px;letter-spacing:0.620px;line-height:16px;color:#0f8a8a;white-space:pre">95</div><div class="a mono" style="left:478.31px;top:342.5px;width:34px;height:16px;font-size:12.3px;letter-spacing:0.620px;line-height:16px;color:#0f8a8a;white-space:pre">96</div><div class="a mono" style="left:537.40px;top:342.5px;height:16px;font-size:12.0px;letter-spacing:0.800px;line-height:16px;color:#000;white-space:pre"><span style="color:#000">    segments(4) = matrix.M10.ToString(format)</span></div><div class="a mono" style="left:478.31px;top:358.5px;width:34px;height:16px;font-size:12.3px;letter-spacing:0.620px;line-height:16px;color:#0f8a8a;white-space:pre">97</div><div class="a mono" style="left:537.40px;top:358.5px;height:16px;font-size:12.0px;letter-spacing:0.800px;line-height:16px;color:#000;white-space:pre"><span style="color:#000">    segments(5) = matrix.M11.ToString(format)</span></div><div class="a mono" style="left:478.31px;top:374.5px;width:34px;height:16px;font-size:12.3px;letter-spacing:0.620px;line-height:16px;color:#0f8a8a;white-space:pre">98</div><div class="a mono" style="left:537.40px;top:374.5px;height:16px;font-size:12.0px;letter-spacing:0.800px;line-height:16px;color:#000;white-space:pre"><span style="color:#000">    segments(6) = matrix.M12.ToString(format)</span></div><div class="a mono" style="left:478.31px;top:390.5px;width:34px;height:16px;font-size:12.3px;letter-spacing:0.620px;line-height:16px;color:#0f8a8a;white-space:pre">99</div><div class="a mono" style="left:478.31px;top:406.5px;width:34px;height:16px;font-size:12.3px;letter-spacing:0.620px;line-height:16px;color:#0f8a8a;white-space:pre">100</div><div class="a mono" style="left:537.40px;top:406.5px;height:16px;font-size:12.0px;letter-spacing:0.800px;line-height:16px;color:#000;white-space:pre"><span style="color:#000">    segments(8) = −matrix.M20.ToString(format)</span></div><div class="a mono" style="left:478.31px;top:422.5px;width:34px;height:16px;font-size:12.3px;letter-spacing:0.620px;line-height:16px;color:#0f8a8a;white-space:pre">101</div><div class="a mono" style="left:537.40px;top:422.5px;height:16px;font-size:12.0px;letter-spacing:0.800px;line-height:16px;color:#000;white-space:pre"><span style="color:#000">    segments(9) = −matrix.M21.ToString(format)</span></div><div class="a mono" style="left:478.31px;top:438.5px;width:34px;height:16px;font-size:12.3px;letter-spacing:0.620px;line-height:16px;color:#0f8a8a;white-space:pre">102</div><div class="a mono" style="left:537.40px;top:438.5px;height:16px;font-size:12.0px;letter-spacing:0.800px;line-height:16px;color:#000;white-space:pre"><span style="color:#000">    segments(10) = −matrix.M22.ToString(format)</span></div><div class="a mono" style="left:478.31px;top:454.5px;width:34px;height:16px;font-size:12.3px;letter-spacing:0.620px;line-height:16px;color:#0f8a8a;white-space:pre">103</div><div class="a mono" style="left:478.31px;top:470.5px;width:34px;height:16px;font-size:12.3px;letter-spacing:0.620px;line-height:16px;color:#0f8a8a;white-space:pre">104</div><div class="a mono" style="left:478.31px;top:486.5px;width:34px;height:16px;font-size:12.3px;letter-spacing:0.620px;line-height:16px;color:#0f8a8a;white-space:pre">105</div><div class="a mono" style="left:537.40px;top:486.5px;height:16px;font-size:12.0px;letter-spacing:0.800px;line-height:16px;color:#000;white-space:pre"><span style="color:#000">    code = </span><span style="color:#0000ff">String</span><span style="color:#000">.</span><span style="color:#0000ff">Join</span><span style="color:#000">(&quot;, &quot;, segments)</span></div><div class="a" style="left:537px;top:501px;width:602px;height:16px;background:#e4e4e4"></div><div class="a mono" style="left:478.31px;top:502.5px;width:34px;height:16px;font-size:12.3px;letter-spacing:0.620px;line-height:16px;color:#0f8a8a;white-space:pre">106</div><div class="a mono" style="left:537.40px;top:502.5px;height:16px;font-size:12.0px;letter-spacing:0.800px;line-height:16px;color:#000;white-space:pre"><span style="color:#000">  </span><span style="color:#0000ff">End</span><span style="color:#000"> </span><span style="color:#0000ff">Sub</span></div><div class="a" style="left:537px;top:517px;width:602px;height:16px;background:#e4e4e4"></div><div class="a mono" style="left:478.31px;top:518.5px;width:34px;height:16px;font-size:12.3px;letter-spacing:0.620px;line-height:16px;color:#0f8a8a;white-space:pre">107</div><div class="a" style="left:537px;top:533px;width:602px;height:16px;background:#e4e4e4"></div><div class="a mono" style="left:478.31px;top:534.5px;width:34px;height:16px;font-size:12.3px;letter-spacing:0.620px;line-height:16px;color:#0f8a8a;white-space:pre">108</div><div class="a mono" style="left:537.40px;top:534.5px;height:16px;font-size:12.0px;letter-spacing:0.800px;line-height:16px;color:#000;white-space:pre"><span style="color:#000">  </span><span style="color:#008000">&#x27;&lt;Custom additional code&gt;</span></div><div class="a mono" style="left:478.31px;top:550.5px;width:34px;height:16px;font-size:12.3px;letter-spacing:0.620px;line-height:16px;color:#0f8a8a;white-space:pre">109</div><div class="a" style="left:537px;top:565px;width:602px;height:16px;background:#e4e4e4"></div><div class="a mono" style="left:478.31px;top:566.5px;width:34px;height:16px;font-size:12.3px;letter-spacing:0.620px;line-height:16px;color:#0f8a8a;white-space:pre">110</div><div class="a mono" style="left:537.40px;top:566.5px;height:16px;font-size:12.0px;letter-spacing:0.800px;line-height:16px;color:#000;white-space:pre"><span style="color:#000">  </span><span style="color:#008000">&#x27;&lt;/Custom additional code&gt;</span></div><div class="a" style="left:537px;top:581px;width:602px;height:16px;background:#e4e4e4"></div><div class="a mono" style="left:478.31px;top:582.5px;width:34px;height:16px;font-size:12.3px;letter-spacing:0.620px;line-height:16px;color:#0f8a8a;white-space:pre">111</div><div class="a mono" style="left:537.40px;top:582.5px;height:16px;font-size:12.0px;letter-spacing:0.800px;line-height:16px;color:#000;white-space:pre"><span style="color:#0000ff">End</span><span style="color:#000"> </span><span style="color:#0000ff">Class</span></div><div class="a" style="left:524px;top:29px;width:1px;height:568px;background:#a0a0a0"></div><div class="a" style="left:520px;top:25px;width:9px;height:9px;background:#fff;border:1px solid #a0a0a0"></div><div class="a" style="left:522px;top:29px;width:5px;height:1px;background:#808080"></div><div class="a" style="left:524px;top:27px;width:1px;height:5px;background:#808080"></div><div class="a" style="left:520px;top:57px;width:9px;height:9px;background:#fff;border:1px solid #a0a0a0"></div><div class="a" style="left:522px;top:61px;width:5px;height:1px;background:#808080"></div><div class="a" style="left:524px;top:59px;width:1px;height:5px;background:#808080"></div><div class="a" style="left:520px;top:89px;width:9px;height:9px;background:#fff;border:1px solid #a0a0a0"></div><div class="a" style="left:522px;top:93px;width:5px;height:1px;background:#808080"></div><div class="a" style="left:524px;top:91px;width:1px;height:5px;background:#808080"></div><div class="a" style="left:520px;top:105px;width:9px;height:9px;background:#fff;border:1px solid #a0a0a0"></div><div class="a" style="left:522px;top:109px;width:5px;height:1px;background:#808080"></div><div class="a" style="left:524px;top:516px;width:6px;height:1px;background:#a0a0a0"></div><div class="a" style="left:520px;top:537px;width:9px;height:9px;background:#fff;border:1px solid #a0a0a0"></div><div class="a" style="left:522px;top:541px;width:5px;height:1px;background:#808080"></div><div class="a" style="left:524px;top:580px;width:6px;height:1px;background:#a0a0a0"></div><div class="a" style="left:524px;top:596px;width:6px;height:1px;background:#a0a0a0"></div><div class="a" style="left:1140px;top:21px;width:17px;height:602px;background:#f0f0f0"></div><div class="a" style="left:1141px;top:317px;width:14px;height:289px;background:#cdcdcd"></div><div class="a" style="left:1140px;top:21px;width:17px;height:6px;background:#fafafa;border:1px solid #a0a0a0"></div><svg class="a" style="left:1142px;top:31px" width="12" height="8"><path d="M2 6 L6 2 L10 6" fill="none" stroke="#606060" stroke-width="1.6"/></svg><svg class="a" style="left:1142px;top:611px" width="12" height="8"><path d="M2 2 L6 6 L10 2" fill="none" stroke="#606060" stroke-width="1.6"/></svg><div class="a" style="left:476px;top:623px;width:664px;height:17px;background:#f0f0f0"></div><div class="a" style="left:499px;top:624px;width:183px;height:15px;background:#cdcdcd"></div><div class="a" style="left:476px;top:623px;width:4px;height:17px;border:1px solid #8a8a8a;background:#fff"></div><svg class="a" style="left:484px;top:626px" width="10" height="12"><path d="M7 2 L3 6 L7 10" fill="none" stroke="#606060" stroke-width="1.6"/></svg><svg class="a" style="left:1126px;top:626px" width="10" height="12"><path d="M3 2 L7 6 L3 10" fill="none" stroke="#606060" stroke-width="1.6"/></svg><div class="a" style="left:475px;top:640px;width:682px;height:1px;background:#fbfbfb"></div><div class="a" style="left:475px;top:651px;width:78px;height:22px;background:#e1e1e1;border:1px solid #adadad;font-size:11.5px;line-height:20px;text-align:center;color:#000">Cache</div><div class="a" style="left:567px;top:654px;font-size:11.2px;line-height:14px;color:#0000ff;text-decoration:underline;white-space:nowrap">Recover from cache</div><div class="a" style="left:1079px;top:651px;width:78px;height:22px;background:#e1e1e1;border:2px solid #0078d7;font-size:11.5px;line-height:18px;text-align:center;color:#000">OK</div></body></html>
